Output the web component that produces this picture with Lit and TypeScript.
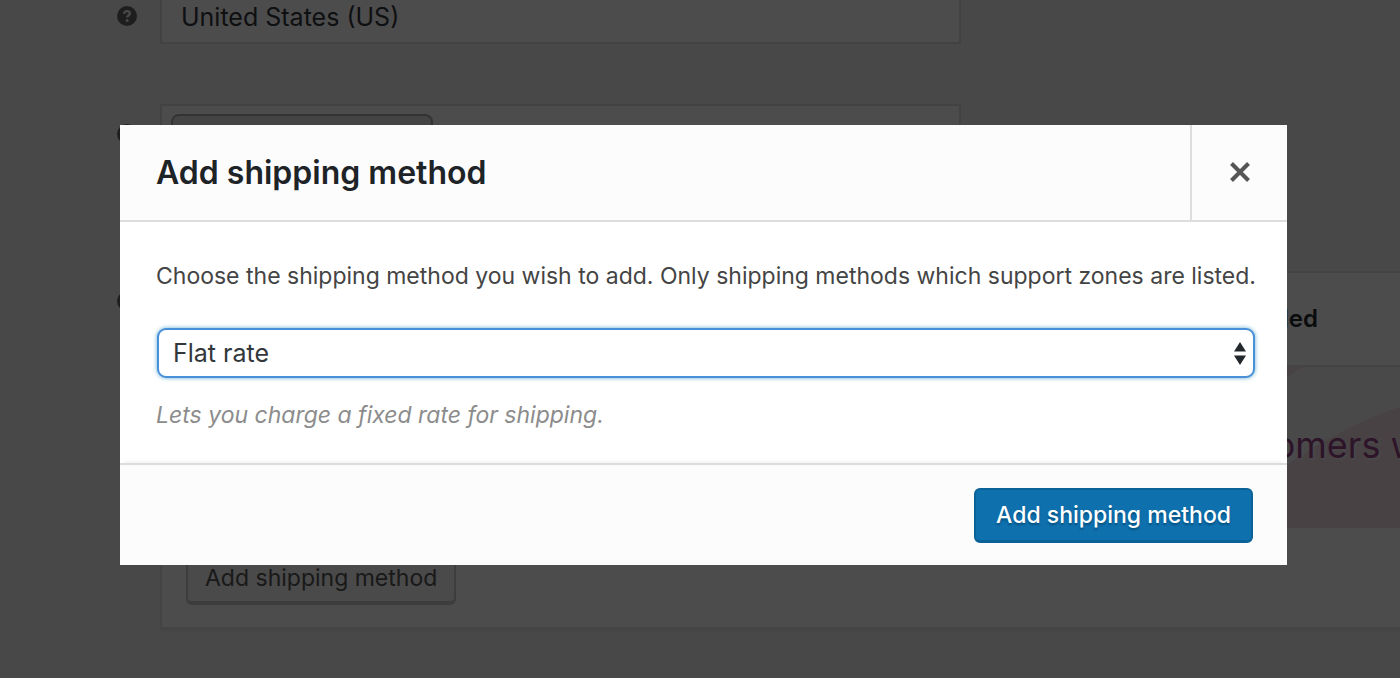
import { LitElement, html, css } from "lit";
import { customElement, state } from "lit/decorators.js";

@customElement("help-tip")
class HelpTip extends LitElement {
  static styles = css`
    :host {
      display: block;
      width: 20px;
      height: 20px;
    }
    .icon {
      display: block;
      width: 20px;
      height: 20px;
    }
  `;

  render() {
    return html`<svg class="icon" viewBox="0 0 20 20" role="img" aria-label="Help">
      <circle cx="10" cy="10" r="10" fill="#666"></circle>
      <path
        d="M7.2 7.7C7.3 6 8.5 5.1 10.1 5.1S12.9 6 12.9 7.5C12.9 9.6 10.1 9.5 10.1 11.6"
        fill="none"
        stroke="#f1f1f1"
        stroke-width="2.4"
      ></path>
      <circle cx="10.1" cy="14.4" r="1.5" fill="#f1f1f1"></circle>
    </svg>`;
  }
}

@customElement("zone-settings")
class ZoneSettings extends LitElement {
  static styles = css`
    :host {
      display: block;
      overflow: hidden;
      background: #f1f1f1;
      color: #32373c;
      font-size: 23px;
      line-height: 32px;
    }
    .form {
      display: grid;
      grid-template-columns: 20px minmax(0, 1fr);
      column-gap: 23px;
      row-gap: 60px;
      padding: 0 0 49px 117px;
    }
    .tip {
      padding-top: 20px;
    }
    .tip.first {
      padding-top: 6px;
    }
    .field {
      box-sizing: border-box;
      max-width: 801px;
      margin-right: 40px;
      border: 2px solid #ddd;
      background: #fff;
    }
    .name {
      border-top: 0;
      padding: 1px 19px 9px;
      font-size: 25px;
    }
    .regions {
      padding: 8px 9px;
      height: 107px;
    }
    .tag {
      box-sizing: border-box;
      width: 262px;
      height: 44px;
      border: 2px solid #aaa;
      border-radius: 8px;
      background: #e4e4e4;
    }
    .methods {
      border: 2px solid #e5e5e5;
      border-right: 0;
      background: #fff;
      box-shadow: 0 2px 2px rgba(0, 0, 0, 0.04);
    }
    .head {
      display: flex;
      justify-content: flex-end;
      padding: 30px 82px 30px 0;
      border-bottom: 2px solid #e5e5e5;
      color: #23282d;
      font-size: 24px;
      font-weight: 600;
    }
    .banner {
      position: relative;
      display: flex;
      justify-content: flex-end;
      height: 161px;
      overflow: hidden;
      background: #f0dde6;
    }
    .wave {
      position: absolute;
      right: 0;
      top: 0;
      width: 240px;
      height: 161px;
    }
    .pitch {
      position: relative;
      margin: 0 -20px 0 0;
      padding-top: 54px;
      color: #96458a;
      font-size: 36px;
      line-height: 48px;
      white-space: nowrap;
      text-shadow: 2px 2px 2px rgba(255, 255, 255, 0.5);
    }
    .foot {
      padding: 24px;
    }
    .add {
      box-sizing: border-box;
      height: 51px;
      padding: 0 17px;
      border: 2px solid #ccc;
      border-radius: 6px;
      background: #f7f7f7;
      box-shadow: 0 2px 0 #ccc;
      color: #555;
      font: inherit;
    }
  `;

  render() {
    return html`
      <div class="form">
        <div class="tip first"><help-tip></help-tip></div>
        <div class="field name">United States (US)</div>
        <div class="tip"><help-tip></help-tip></div>
        <div class="field regions"><div class="tag"></div></div>
        <div class="tip"><help-tip></help-tip></div>
        <div class="methods">
          <div class="head">Enabled</div>
          <div class="banner">
            <svg class="wave" viewBox="0 0 240 161" aria-hidden="true">
              <path
                d="M145 0C139 2 133 6 127 10L60 48V150L127 98C140 89 155 79 170 71C192 59 214 48 240 40V0Z"
                fill="#f9f3f9"
              ></path>
            </svg>
            <p class="pitch">customers w</p>
          </div>
          <div class="foot">
            <button class="add" type="button">Add shipping method</button>
          </div>
        </div>
      </div>
    `;
  }
}

@customElement("shipping-modal")
class ShippingModal extends LitElement {
  static styles = css`
    :host {
      display: block;
      background: #fff;
      color: #444;
      font-size: 23px;
      line-height: 36px;
    }
    .header {
      display: flex;
      align-items: stretch;
      justify-content: space-between;
      border-bottom: 2px solid #ddd;
      background: #fcfcfc;
    }
    .title {
      margin: 0;
      padding: 24px 36px;
      color: #1e2327;
      font-size: 32px;
      font-weight: 600;
      line-height: 47px;
    }
    .close {
      display: grid;
      place-items: center;
      width: 97px;
      padding: 0;
      border: 0;
      border-left: 2px solid #ddd;
      background: transparent;
    }
    .cross {
      width: 20px;
      height: 20px;
    }
    .body {
      padding: 36px 24px 30px 36px;
    }
    .intro {
      margin: 0;
    }
    .picker {
      position: relative;
      margin: 34px 8px 19px 0;
      padding-left: 1px;
    }
    .method {
      display: block;
      box-sizing: border-box;
      width: 100%;
      height: 50px;
      padding: 0 14px;
      border: 2px solid #4a90d9;
      border-radius: 9px;
      outline: 0;
      background: #fff;
      box-shadow: 0 0 4px rgba(30, 140, 190, 0.7);
      color: #32373c;
      font: inherit;
      font-size: 25px;
      appearance: none;
    }
    .arrows {
      position: absolute;
      right: 9px;
      top: 14px;
      width: 12px;
      height: 23px;
      pointer-events: none;
    }
    .hint {
      margin: 0;
      color: #8c8c8c;
      font-style: italic;
    }
    .footer {
      display: flex;
      justify-content: flex-end;
      padding: 23px 34px 22px;
      border-top: 2px solid #ddd;
      background: #fcfcfc;
      box-shadow: 0 -4px 4px -4px rgba(0, 0, 0, 0.1);
    }
    .submit {
      box-sizing: border-box;
      height: 55px;
      padding: 0 20px;
      border: 2px solid #0a6299;
      border-bottom-width: 3px;
      border-radius: 6px;
      background: #0f70ae;
      color: #fff;
      font: inherit;
      font-weight: 500;
      text-shadow: 0 2px 2px #00507f;
    }
  `;

  @state() private method = "Flat rate";

  render() {
    return html`
      <div class="header">
        <h1 class="title">Add shipping method</h1>
        <button class="close" type="button" aria-label="Close">
          <svg class="cross" viewBox="0 0 20 20" aria-hidden="true">
            <path d="M1.5 1.5 18.5 18.5M18.5 1.5 1.5 18.5" stroke="#555" stroke-width="4"></path>
          </svg>
        </button>
      </div>
      <div class="body">
        <p class="intro" id="intro">
          Choose the shipping method you wish to add. Only shipping methods which support zones are
          listed.
        </p>
        <div class="picker">
          <select class="method" aria-labelledby="intro">
            <option selected>${this.method}</option>
          </select>
          <svg class="arrows" viewBox="0 0 12 23" aria-hidden="true">
            <path d="M6 0 12 9.5H0ZM0 13.5H12L6 23Z" fill="#23282d"></path>
          </svg>
        </div>
        <p class="hint">Lets you charge a fixed rate for shipping.</p>
      </div>
      <div class="footer">
        <button class="submit" type="button">Add shipping method</button>
      </div>
    `;
  }
}

@customElement("app-root")
class AppRoot extends LitElement {
  static styles = css`
    :host {
      display: block;
      min-height: 100vh;
      background: #f1f1f1;
      font-family: Inter, "Liberation Sans", sans-serif;
    }
    .backdrop {
      position: fixed;
      inset: 0;
      box-sizing: border-box;
      display: grid;
      align-items: center;
      padding: 11px 113px 0 120px;
      background: rgba(0, 0, 0, 0.7);
    }
  `;

  render() {
    return html`
      <zone-settings></zone-settings>
      <div class="backdrop">
        <shipping-modal role="dialog" aria-modal="true"></shipping-modal>
      </div>
    `;
  }
}
